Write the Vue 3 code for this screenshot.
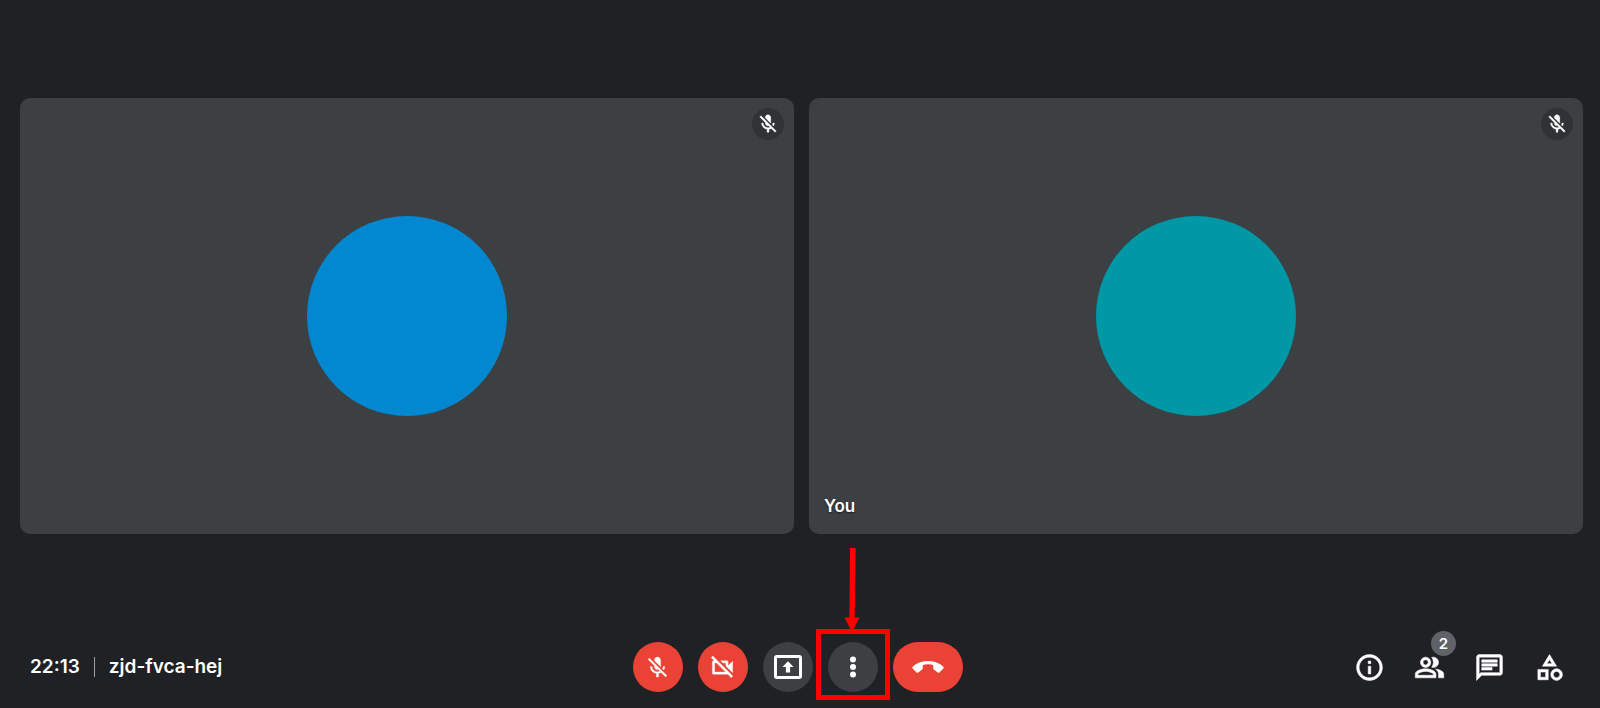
<template>
  <div class="meeting">
    <main class="stage">
      <section v-for="p in participants" :key="p.id" class="tile">
        <span class="tile-mic">
          <svg viewBox="0 0 24 24" aria-label="Muted"><path :d="icons.micOff" /></svg>
        </span>
        <div class="avatar" :class="p.color"></div>
        <span v-if="p.name" class="name">{{ p.name }}</span>
      </section>
    </main>

    <footer class="bar">
      <div class="meta">
        <time>22:13</time>
        <span class="divider"></span>
        <span>zjd-fvca-hej</span>
      </div>

      <div class="controls">
        <button class="ctrl off" aria-label="Turn on microphone">
          <svg class="mic" viewBox="0 0 24 24"><path :d="icons.micOff" /></svg>
        </button>
        <button class="ctrl off" aria-label="Turn on camera">
          <svg class="cam" viewBox="0 0 24 24"><path :d="icons.camOff" /></svg>
        </button>
        <button class="ctrl" aria-label="Present now">
          <svg class="present" viewBox="0 0 28 24">
            <rect x="1.5" y="1.5" width="25" height="21" rx="1.5" fill="none" stroke="#fff" stroke-width="3" />
            <path d="M14 6.2l5.600 5.800h-3.500v5.400h-4.200V12H8.400z" />
          </svg>
        </button>
        <div class="more">
          <button class="ctrl" aria-label="More options">
            <svg class="dots" viewBox="0 0 8 24">
              <circle cx="4" cy="4.5" r="3" />
              <circle cx="4" cy="12" r="3" />
              <circle cx="4" cy="19.5" r="3" />
            </svg>
          </button>
          <svg class="arrow" viewBox="0 0 16 84">
            <path d="M6 0h5.700L10.700 69.500h4.800L8 84 .5 69.500h4.900z" />
          </svg>
          <span class="highlight"></span>
        </div>
        <button class="ctrl hangup" aria-label="Leave call">
          <svg class="phone" viewBox="0 0 32 12">
            <path d="M16 0C9.800 0 4.200 2.300.700 5.700q-.9.900 0 1.800L4.300 11.300q.9.900 1.900.2l3.700-2.700q.9-.7.900-1.700V4c1.600-.5 3.400-.7 5.200-.7s3.600.2 5.200.7v3.100q0 1 .9 1.700l3.700 2.700q1 .7 1.900-.2l3.600-3.800q.9-.9 0-1.800C27.800 2.300 22.200 0 16 0z" />
          </svg>
        </button>
      </div>

      <nav class="panels">
        <button v-for="p in panels" :key="p.label" class="panel" :aria-label="p.label">
          <svg viewBox="0 0 24 24"><path :d="p.icon" /></svg>
          <span v-if="p.count" class="count">{{ p.count }}</span>
        </button>
      </nav>
    </footer>
  </div>
</template>

<script setup>
const icons = {
  micOff: 'M19 11h-1.700c0 .74-.16 1.430-.43 2.050l1.230 1.230c.56-.98.9-2.090.9-3.280zm-4.020.17c0-.06.02-.11.02-.17V5c0-1.660-1.340-3-3-3S9 3.340 9 5v.18l5.980 5.990zM4.270 3L3 4.270l6.010 6.010V11c0 1.660 1.330 3 2.990 3 .22 0 .44-.03.65-.08l1.660 1.660c-.71.33-1.500.52-2.310.52-2.760 0-5.300-2.100-5.300-5.100H5c0 3.410 2.720 6.230 6 6.720V21h2v-3.280c.91-.13 1.770-.45 2.540-.9L19.730 21 21 19.730 4.270 3z',
  camOff: 'M9.560 8l-2-2-4.150-4.140L2 3.270 4.730 6H4c-.55 0-1 .45-1 1v10c0 .55.45 1 1 1h12c.21 0 .39-.08.55-.18L19.730 21l1.410-1.410-8.860-8.860L9.560 8zM5 16V8h1.730l8 8H5zm10-8v2.610l6 6V6.500l-4 4V7c0-.55-.45-1-1-1h-5.610l2 2H15z',
}

const participants = [
  { id: 1, name: '', color: 'blue' },
  { id: 2, name: 'You', color: 'teal' },
]

const panels = [
  {
    label: 'Meeting details',
    icon: 'M11 7h2v2h-2zm0 4h2v6h-2zm1-9C6.480 2 2 6.480 2 12s4.480 10 10 10 10-4.480 10-10S17.520 2 12 2zm0 18c-4.410 0-8-3.590-8-8s3.590-8 8-8 8 3.590 8 8-3.590 8-8 8z',
  },
  {
    label: 'People',
    count: 2,
    icon: 'M16.670 13.130C18.040 14.060 19 15.320 19 17v3h4v-3c0-2.180-3.570-3.470-6.330-3.870zM15 12c2.210 0 4-1.790 4-4s-1.790-4-4-4c-.47 0-.91.1-1.330.24C14.500 5.270 15 6.580 15 8s-.5 2.730-1.330 3.760c.42.14.86.24 1.330.24zM9 12c2.210 0 4-1.790 4-4s-1.790-4-4-4-4 1.790-4 4 1.790 4 4 4zm0-6c1.100 0 2 .9 2 2s-.9 2-2 2-2-.9-2-2 .9-2 2-2zM9 13c-2.670 0-8 1.340-8 4v3h16v-3c0-2.660-5.330-4-8-4zm6 5H3v-.99C3.200 16.290 6.300 15 9 15s5.800 1.290 6 2v1z',
  },
  {
    label: 'Chat',
    icon: 'M4 4h16v12H5.170L4 17.170V4m0-2c-1.100 0-1.990.9-1.990 2L2 22l4-4h14c1.100 0 2-.9 2-2V4c0-1.100-.9-2-2-2H4zm2 10h8v2H6v-2zm0-3h12v2H6V9zm0-3h12v2H6V6z',
  },
  {
    label: 'Activities',
    icon: 'M12 2l-5.500 9h11L12 2zm0 3.840L13.930 9h-3.870L12 5.840zM17.500 13c-2.490 0-4.500 2.010-4.500 4.500s2.010 4.500 4.500 4.500 4.500-2.010 4.500-4.500-2.010-4.500-4.500-4.500zm0 7c-1.380 0-2.500-1.120-2.500-2.500s1.120-2.500 2.500-2.500 2.500 1.120 2.500 2.500-1.120 2.500-2.500 2.500zM3 21.500h8v-8H3v8zm2-6h4v4H5v-4z',
  },
]
</script>

<style>
body { background: #202124; }
</style>

<style scoped>
.meeting {
  min-height: 100vh; display: flex; flex-direction: column;
  background: #202124; color: #fff;
  font-family: Inter, "Liberation Sans", sans-serif; font-weight: 600;
}
svg { display: block; fill: #fff; }
button {
  border: 0; padding: 0; color: inherit; font: inherit; cursor: pointer;
  display: flex; align-items: center; justify-content: center;
}

.stage {
  flex: 1; display: grid; grid-template-columns: 1fr 1fr; gap: 15px;
  align-content: center; padding: 16px 17px 10px 20px;
}
.tile {
  position: relative; aspect-ratio: 16 / 9; border-radius: 10px;
  background: #3c4043; display: flex; align-items: center; justify-content: center;
}
.avatar { width: 200px; height: 200px; border-radius: 50%; }
.blue { background: #0288d1; }
.teal { background: #0097a7; }
.tile-mic {
  position: absolute; top: 10px; right: 10px; width: 32px; height: 32px;
  border-radius: 50%; background: #303336;
  display: flex; align-items: center; justify-content: center;
}
.tile-mic svg { width: 22px; height: 22px; stroke: #fff; stroke-width: .4; }
.name {
  position: absolute; left: 15px; bottom: 18px; font-size: 17px; line-height: 20px;
  text-shadow: 0 1px 2px #0009;
}

.bar {
  display: grid; grid-template-columns: 1fr auto 1fr; align-items: center;
  padding: 16px 35px 16px 30px;
}
.meta { display: flex; align-items: center; gap: 14px; font-size: 19px; line-height: 24px; }
.divider { width: 1px; height: 20px; background: #9aa0a6; }

.controls { display: flex; gap: 15px; }
.ctrl { width: 50px; height: 50px; border-radius: 25px; background: #3c4043; }
.ctrl.off, .ctrl.hangup { background: #ea4335; }
.ctrl.hangup { width: 70px; }
.mic { width: 25px; height: 25px; stroke: #fff; stroke-width: .3; }
.cam { width: 27px; height: 27px; stroke: #fff; stroke-width: .3; }
.present { width: 28px; height: 24px; }
.dots { width: 8px; height: 24px; }
.phone { width: 32px; height: 12px; }

.more { position: relative; }
.highlight {
  position: absolute; inset: -13px -12px -8px; border: 5px solid #f00;
  pointer-events: none;
}
.arrow {
  position: absolute; left: 16px; bottom: 60px; width: 16px; height: 84px;
  fill: #f00; pointer-events: none;
}

.panels { display: flex; justify-content: flex-end; gap: 29px; }
.panel { position: relative; background: none; }
.panel svg { width: 31px; height: 31px; stroke: #fff; stroke-width: .4; }
.count {
  position: absolute; left: 17px; top: -21px; width: 25px; height: 25px;
  border-radius: 50%; background: #5f6368;
  font-size: 15px; line-height: 25px; text-align: center;
}
</style>
